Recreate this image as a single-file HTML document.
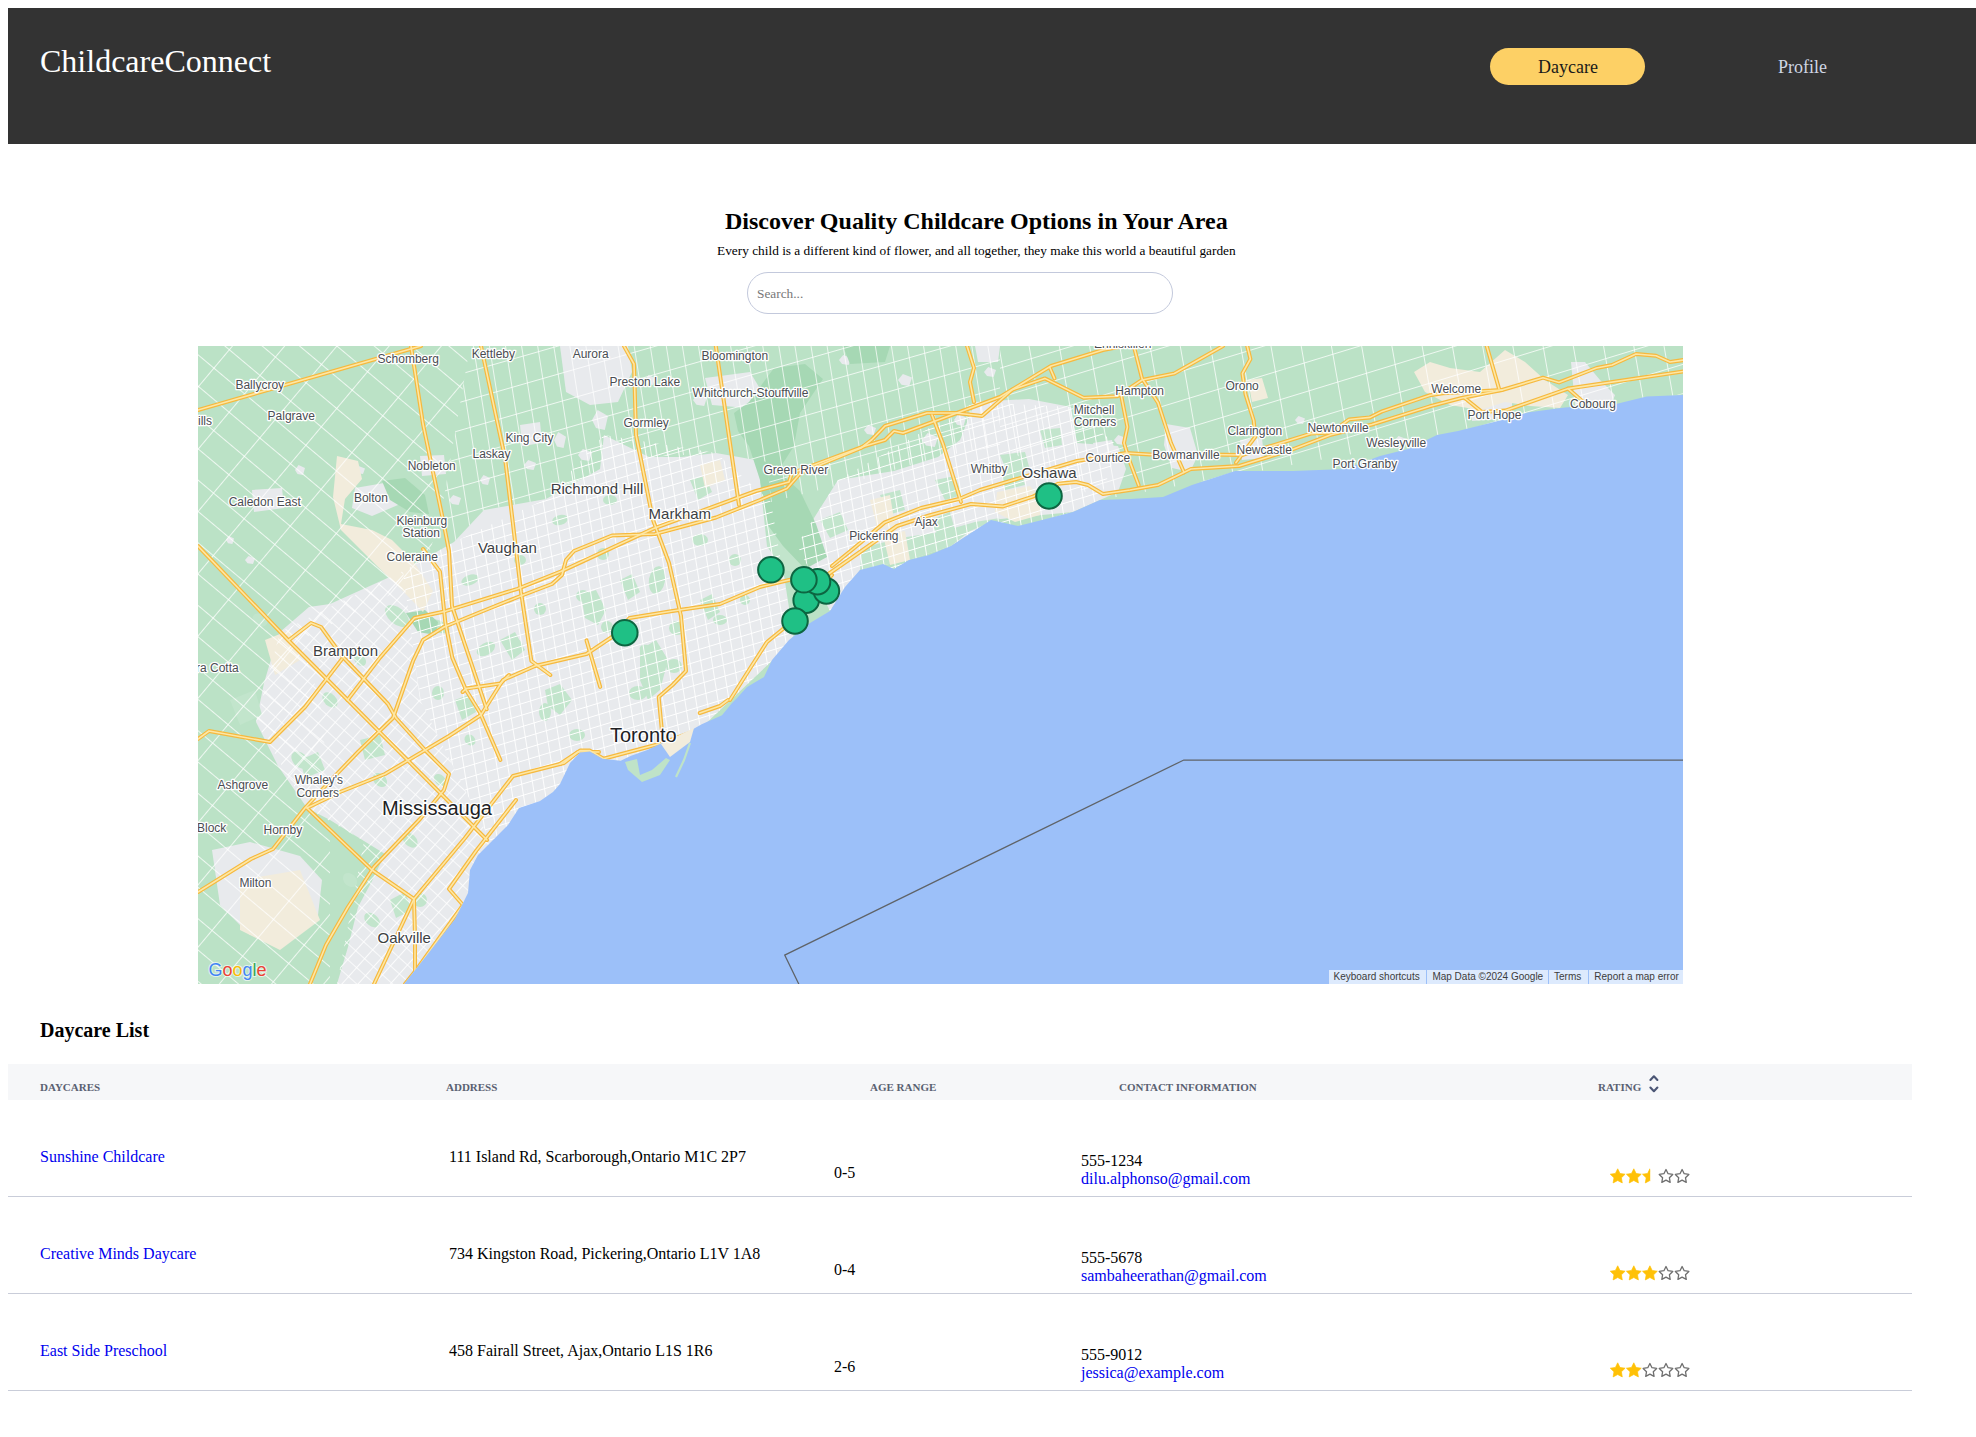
<!DOCTYPE html>
<html><head><meta charset="utf-8">
<style>
html,body{margin:0;padding:0;background:#fff;}
body{width:1976px;height:1437px;position:relative;overflow:hidden;font-family:"Liberation Serif",serif;}
.a{position:absolute;white-space:nowrap;}
#hdr{left:8px;top:8px;width:1968px;height:136px;background:#333333;}
#logo{left:40px;top:43px;font-size:32px;line-height:36px;color:#fff;}
#btn{left:1490px;top:48px;width:155px;height:37px;border-radius:19px;background:#fdd065;}
#btnt{left:1538px;top:57px;font-size:18px;line-height:20px;color:#1a1a1a;}
#prof{left:1778px;top:57px;font-size:18px;line-height:20px;color:#cfd6e4;}
#title{left:725px;top:208px;font-size:24px;font-weight:bold;line-height:26px;color:#000;}
#sub{left:717px;top:243px;font-size:13.333px;line-height:15px;color:#000;}
#search{left:747px;top:272px;width:424px;height:40px;border:1px solid #c3c9dc;border-radius:21px;}
#ph{left:757px;top:286px;font-size:13.333px;line-height:15px;color:#777;}
#map{left:198px;top:346px;width:1485px;height:638px;overflow:hidden;background:#9cc0f9;}
#dl{left:40px;top:1019px;font-size:20px;font-weight:bold;line-height:23px;color:#000;}
#thead{left:8px;top:1064px;width:1904px;height:36px;background:#f6f7f9;}
.th{font-size:11px;font-weight:bold;line-height:12px;color:#5a6172;top:1081px;}
.rowline{left:8px;width:1904px;height:1px;background:#c9cdd9;}
.td{font-size:16px;line-height:18px;color:#000;}
.lnk{color:#0000ee;}
</style></head><body>
<div id="hdr" class="a"></div>
<div id="logo" class="a">ChildcareConnect</div>
<div id="btn" class="a"></div>
<div id="btnt" class="a">Daycare</div>
<div id="prof" class="a">Profile</div>

<div id="title" class="a">Discover Quality Childcare Options in Your Area</div>
<div id="sub" class="a">Every child is a different kind of flower, and all together, they make this world a beautiful garden</div>
<div id="search" class="a"></div>
<div id="ph" class="a">Search...</div>

<div id="map" class="a">
<svg width="1485" height="638" viewBox="198 346 1485 638" style="position:absolute;left:0;top:0;display:block">
<defs>
<pattern id="gPeel" width="40" height="24" patternUnits="userSpaceOnUse" patternTransform="rotate(40)"><path d="M0 0 H40 M0 0 V24" stroke="#ffffff" stroke-width="1.5" stroke-opacity="1" fill="none"/></pattern>
<pattern id="gYork" width="16" height="27" patternUnits="userSpaceOnUse" patternTransform="rotate(-16) skewX(-7)"><path d="M0 0 H16 M0 0 V27" stroke="#ffffff" stroke-width="1.45" stroke-opacity="1" fill="none"/></pattern>
<pattern id="gUrb" width="11" height="11" patternUnits="userSpaceOnUse" patternTransform="rotate(-17) skewX(-8)"><path d="M0 0 H11 M0 0 V11" stroke="#ffffff" stroke-width="1.8" stroke-opacity="1" fill="none"/></pattern>
<pattern id="gMiss" width="12" height="12" patternUnits="userSpaceOnUse" patternTransform="rotate(42)"><path d="M0 0 H12 M0 0 V12" stroke="#ffffff" stroke-width="1.7" stroke-opacity="1" fill="none"/></pattern>
</defs>
<rect x="198" y="346" width="1485" height="638" fill="#bbe2c6"/>
<polygon points="198.0,984.0 337.0,984.0 348.0,947.0 358.0,907.0 372.0,881.0 385.0,854.0 364.0,841.0 330.0,820.0 307.0,808.0 278.0,766.0 256.0,722.0 264.0,683.0 272.0,656.0 280.0,632.0 309.0,607.0 330.0,604.0 403.0,571.0 454.0,542.0 484.0,510.0 546.0,499.0 600.0,469.0 604.0,435.0 649.0,457.0 682.0,457.0 716.0,453.0 767.0,462.0 771.0,502.0 760.0,480.0 767.0,546.0 783.0,569.0 794.0,640.0 700.0,729.0 404.0,984.0" fill="#e8eaed"/>
<polygon points="212.0,850.0 250.0,842.0 300.0,856.0 322.0,880.0 318.0,915.0 290.0,940.0 250.0,935.0 220.0,905.0" fill="#e8eaed"/>
<polygon points="797.0,545.0 838.0,480.0 894.0,471.0 938.0,457.0 960.0,440.0 975.0,402.0 1029.0,399.0 1071.0,407.0 1077.0,443.0 1118.0,446.0 1126.0,469.0 1118.0,492.0 1100.0,500.0 1073.0,512.0 991.0,520.0 951.0,546.0 909.0,560.0 860.0,570.0 830.0,611.0" fill="#e8eaed"/>
<polygon points="560.0,346.0 628.0,346.0 632.0,372.0 618.0,402.0 590.0,405.0 566.0,392.0" fill="#e8eaed"/>
<polygon points="705.0,378.0 750.0,372.0 762.0,392.0 748.0,408.0 712.0,405.0" fill="#e8eaed"/>
<polygon points="355.0,488.0 390.0,482.0 398.0,505.0 372.0,516.0 352.0,508.0" fill="#e8eaed"/>
<polygon points="1166.0,424.0 1190.0,428.0 1198.0,455.0 1190.0,472.0 1172.0,468.0 1164.0,445.0" fill="#e8eaed"/>
<polygon points="1093.0,443.0 1112.0,440.0 1118.0,462.0 1098.0,467.0" fill="#e8eaed"/>
<polygon points="1468.0,395.0 1512.0,393.0 1512.0,418.0 1472.0,421.0" fill="#e8eaed"/>
<polygon points="1571.0,362.0 1585.0,362.0 1600.0,380.0 1615.0,395.0 1612.0,403.0 1575.0,405.0" fill="#e8eaed"/>
<polygon points="1240.0,440.0 1262.0,438.0 1264.0,458.0 1242.0,460.0" fill="#e8eaed"/>
<polygon points="520.0,425.0 540.0,422.0 542.0,443.0 522.0,446.0" fill="#e8eaed"/>
<polygon points="420.0,456.0 444.0,455.0 446.0,474.0 422.0,476.0" fill="#e8eaed"/>
<polygon points="252.0,490.0 282.0,488.0 284.0,508.0 254.0,512.0" fill="#e8eaed"/>
<polygon points="975.0,346.0 1000.0,346.0 998.0,362.0 978.0,362.0" fill="#e8eaed"/>
<polygon points="760.0,480.0 771.0,502.0 767.0,546.0 783.0,569.0 800.0,575.0 815.0,560.0 800.0,520.0 790.0,490.0" fill="#c2e5cc"/>
<polygon points="581.0,595.0 596.0,590.0 606.0,610.0 598.0,625.0 585.0,618.0" fill="#c2e5cc"/>
<polygon points="640.0,650.0 656.0,640.0 668.0,660.0 660.0,690.0 648.0,700.0 640.0,680.0" fill="#c2e5cc"/>
<polygon points="545.0,690.0 560.0,684.0 572.0,700.0 560.0,715.0 548.0,706.0" fill="#c2e5cc"/>
<polygon points="620.0,580.0 632.0,574.0 640.0,592.0 628.0,600.0" fill="#c2e5cc"/>
<polygon points="700.0,600.0 712.0,594.0 720.0,612.0 708.0,620.0" fill="#c2e5cc"/>
<polygon points="500.0,640.0 515.0,632.0 525.0,650.0 512.0,660.0" fill="#c2e5cc"/>
<polygon points="455.0,700.0 470.0,694.0 476.0,712.0 462.0,720.0" fill="#c2e5cc"/>
<polygon points="690.0,480.0 705.0,476.0 712.0,492.0 698.0,500.0" fill="#c2e5cc"/>
<polygon points="880.0,495.0 900.0,490.0 905.0,510.0 888.0,515.0" fill="#c2e5cc"/>
<polygon points="930.0,520.0 950.0,512.0 955.0,530.0 938.0,536.0" fill="#c2e5cc"/>
<polygon points="1000.0,470.0 1020.0,465.0 1025.0,485.0 1005.0,490.0" fill="#c2e5cc"/>
<polygon points="360.0,740.0 380.0,735.0 385.0,755.0 365.0,760.0" fill="#c2e5cc"/>
<polygon points="300.0,760.0 318.0,752.0 325.0,770.0 305.0,778.0" fill="#c2e5cc"/>
<polygon points="390.0,900.0 405.0,892.0 412.0,910.0 396.0,918.0" fill="#c2e5cc"/>
<polygon points="230.0,700.0 255.0,690.0 262.0,715.0 240.0,725.0" fill="#c2e5cc"/>
<polygon points="862.0,548.0 900.0,538.0 940.0,532.0 975.0,522.0 1000.0,518.0 970.0,531.0 951.0,546.0 909.0,560.0 860.0,570.0" fill="#c2e5cc"/>
<polygon points="935.0,480.0 955.0,476.0 962.0,495.0 945.0,500.0" fill="#c2e5cc"/>
<polygon points="1000.0,455.0 1025.0,452.0 1030.0,470.0 1008.0,474.0" fill="#c2e5cc"/>
<polygon points="1040.0,430.0 1060.0,428.0 1062.0,445.0 1045.0,448.0" fill="#c2e5cc"/>
<polygon points="820.0,520.0 840.0,512.0 848.0,530.0 830.0,538.0" fill="#c2e5cc"/>
<ellipse cx="397" cy="616" rx="14" ry="8" transform="rotate(40 397 616)" fill="#c2e5cc"/>
<ellipse cx="437" cy="626" rx="13" ry="6" transform="rotate(20 437 626)" fill="#c2e5cc"/>
<ellipse cx="486" cy="649" rx="10" ry="6" transform="rotate(-30 486 649)" fill="#c2e5cc"/>
<ellipse cx="515" cy="647" rx="8" ry="8" transform="rotate(0 515 647)" fill="#c2e5cc"/>
<ellipse cx="540" cy="609" rx="6" ry="6" transform="rotate(0 540 609)" fill="#c2e5cc"/>
<ellipse cx="583" cy="596" rx="7" ry="6" transform="rotate(0 583 596)" fill="#c2e5cc"/>
<ellipse cx="603" cy="554" rx="6" ry="6" transform="rotate(0 603 554)" fill="#c2e5cc"/>
<ellipse cx="607" cy="627" rx="6" ry="6" transform="rotate(0 607 627)" fill="#c2e5cc"/>
<ellipse cx="652" cy="652" rx="13" ry="6" transform="rotate(20 652 652)" fill="#c2e5cc"/>
<ellipse cx="657" cy="580" rx="8" ry="14" transform="rotate(10 657 580)" fill="#c2e5cc"/>
<ellipse cx="677" cy="628" rx="8" ry="7" transform="rotate(0 677 628)" fill="#c2e5cc"/>
<ellipse cx="674" cy="666" rx="8" ry="7" transform="rotate(0 674 666)" fill="#c2e5cc"/>
<ellipse cx="638" cy="693" rx="9" ry="7" transform="rotate(0 638 693)" fill="#c2e5cc"/>
<ellipse cx="545" cy="712" rx="6" ry="9" transform="rotate(0 545 712)" fill="#c2e5cc"/>
<ellipse cx="438" cy="693" rx="6" ry="7" transform="rotate(0 438 693)" fill="#c2e5cc"/>
<ellipse cx="577" cy="735" rx="8" ry="6" transform="rotate(0 577 735)" fill="#c2e5cc"/>
<ellipse cx="470" cy="580" rx="9" ry="5" transform="rotate(-20 470 580)" fill="#c2e5cc"/>
<ellipse cx="520" cy="560" rx="6" ry="5" transform="rotate(0 520 560)" fill="#c2e5cc"/>
<ellipse cx="560" cy="520" rx="8" ry="5" transform="rotate(-15 560 520)" fill="#c2e5cc"/>
<ellipse cx="610" cy="500" rx="7" ry="5" transform="rotate(0 610 500)" fill="#c2e5cc"/>
<ellipse cx="700" cy="540" rx="8" ry="6" transform="rotate(0 700 540)" fill="#c2e5cc"/>
<ellipse cx="735" cy="560" rx="6" ry="6" transform="rotate(0 735 560)" fill="#c2e5cc"/>
<ellipse cx="720" cy="620" rx="7" ry="5" transform="rotate(0 720 620)" fill="#c2e5cc"/>
<ellipse cx="745" cy="600" rx="5" ry="5" transform="rotate(0 745 600)" fill="#c2e5cc"/>
<ellipse cx="330" cy="700" rx="9" ry="6" transform="rotate(45 330 700)" fill="#c2e5cc"/>
<ellipse cx="360" cy="660" rx="7" ry="5" transform="rotate(45 360 660)" fill="#c2e5cc"/>
<ellipse cx="300" cy="760" rx="10" ry="7" transform="rotate(45 300 760)" fill="#c2e5cc"/>
<ellipse cx="380" cy="780" rx="8" ry="6" transform="rotate(45 380 780)" fill="#c2e5cc"/>
<ellipse cx="410" cy="840" rx="9" ry="6" transform="rotate(45 410 840)" fill="#c2e5cc"/>
<ellipse cx="350" cy="880" rx="8" ry="6" transform="rotate(45 350 880)" fill="#c2e5cc"/>
<ellipse cx="440" cy="780" rx="7" ry="5" transform="rotate(45 440 780)" fill="#c2e5cc"/>
<ellipse cx="470" cy="740" rx="6" ry="5" transform="rotate(45 470 740)" fill="#c2e5cc"/>
<ellipse cx="260" cy="620" rx="8" ry="6" transform="rotate(30 260 620)" fill="#c2e5cc"/>
<ellipse cx="420" cy="900" rx="7" ry="7" transform="rotate(0 420 900)" fill="#c2e5cc"/>
<ellipse cx="372" cy="920" rx="9" ry="6" transform="rotate(40 372 920)" fill="#c2e5cc"/>
<path d="M565 380 L572.0 366 L585 374.4 L581.0 394 L570.0 391.2 Z" fill="#e8eaed"/>
<path d="M592 420 L597.6 410 L608 416.0 L604.8 430 L596.0 428.0 Z" fill="#e8eaed"/>
<path d="M578 455 L582.9 449 L592 452.6 L589.2 461 L581.5 459.8 Z" fill="#e8eaed"/>
<path d="M617 470 L622.6 464 L633 467.6 L629.8 476 L621.0 474.8 Z" fill="#e8eaed"/>
<path d="M554 440 L558.2 432 L566 436.8 L563.6 448 L557.0 446.4 Z" fill="#e8eaed"/>
<path d="M524 465 L528.2 460 L536 463.0 L533.6 470 L527.0 469.0 Z" fill="#e8eaed"/>
<path d="M693 400 L697.9 394 L707 397.6 L704.2 406 L696.5 404.8 Z" fill="#e8eaed"/>
<path d="M645 380 L648.5 375 L655 378.0 L653.0 385 L647.5 384.0 Z" fill="#e8eaed"/>
<path d="M839 360 L843.2 355 L851 358.0 L848.6 365 L842.0 364.0 Z" fill="#e8eaed"/>
<path d="M898 380 L902.9 374 L912 377.6 L909.2 386 L901.5 384.8 Z" fill="#e8eaed"/>
<path d="M922 440 L927.6 433 L938 437.2 L934.8 447 L926.0 445.6 Z" fill="#e8eaed"/>
<path d="M954 420 L958.2 414 L966 417.6 L963.6 426 L957.0 424.8 Z" fill="#e8eaed"/>
<path d="M984 372 L988.2 367 L996 370.0 L993.6 377 L987.0 376.0 Z" fill="#e8eaed"/>
<path d="M1114 440 L1118.2 435 L1126 438.0 L1123.6 445 L1117.0 444.0 Z" fill="#e8eaed"/>
<path d="M864 430 L868.2 425 L876 428.0 L873.6 435 L867.0 434.0 Z" fill="#e8eaed"/>
<path d="M810 470 L813.5 465 L820 468.0 L818.0 475 L812.5 474.0 Z" fill="#e8eaed"/>
<path d="M449 500 L453.2 495 L461 498.0 L458.6 505 L452.0 504.0 Z" fill="#e8eaed"/>
<path d="M480 480 L483.5 475 L490 478.0 L488.0 485 L482.5 484.0 Z" fill="#e8eaed"/>
<path d="M295 470 L298.5 465 L305 468.0 L303.0 475 L297.5 474.0 Z" fill="#e8eaed"/>
<path d="M355 470 L358.5 466 L365 468.4 L363.0 474 L357.5 473.2 Z" fill="#e8eaed"/>
<path d="M245 560 L248.5 556 L255 558.4 L253.0 564 L247.5 563.2 Z" fill="#e8eaed"/>
<path d="M226 540 L228.8 536 L234 538.4 L232.4 544 L228.0 543.2 Z" fill="#e8eaed"/>
<path d="M1295 420 L1298.5 416 L1305 418.4 L1303.0 424 L1297.5 423.2 Z" fill="#e8eaed"/>
<path d="M1395 440 L1398.5 436 L1405 438.4 L1403.0 444 L1397.5 443.2 Z" fill="#e8eaed"/>
<polygon points="734.0,413.0 749.0,402.0 774.0,368.0 805.0,364.0 823.0,379.0 800.0,413.0 794.0,446.0 778.0,471.0 800.0,491.0 816.0,524.0 827.0,557.0 805.0,569.0 783.0,546.0 767.0,524.0 760.0,480.0 749.0,446.0 738.0,431.0" fill="#a6d8b4"/>
<polygon points="843.0,346.0 890.0,346.0 885.0,362.0 850.0,364.0" fill="#a6d8b4"/>
<polygon points="382.0,481.0 405.0,478.0 425.0,495.0 429.0,514.0 410.0,512.0 390.0,500.0" fill="#a6d8b4"/>
<polygon points="406.0,613.0 425.0,610.0 438.0,622.0 436.0,635.0 418.0,632.0" fill="#a6d8b4"/>
<polygon points="337.0,456.0 358.0,461.0 362.0,479.0 345.0,499.0 341.0,524.0 372.0,530.0 392.0,540.0 413.0,561.0 433.0,591.0 423.0,612.0 403.0,591.0 378.0,567.0 341.0,530.0 333.0,497.0" fill="#f2ecdc"/>
<polygon points="1414.0,372.0 1430.0,362.0 1450.0,368.0 1480.0,372.0 1505.0,350.0 1525.0,362.0 1545.0,380.0 1568.0,395.0 1560.0,408.0 1530.0,406.0 1505.0,402.0 1480.0,410.0 1450.0,405.0 1425.0,392.0" fill="#f2ecdc"/>
<polygon points="997.0,492.0 1030.0,486.0 1042.0,500.0 1040.0,515.0 1015.0,522.0 995.0,512.0" fill="#f2ecdc"/>
<polygon points="883.0,535.0 905.0,531.0 910.0,560.0 890.0,565.0" fill="#f2ecdc"/>
<polygon points="240.0,880.0 300.0,870.0 320.0,920.0 280.0,950.0 240.0,930.0" fill="#f2ecdc"/>
<polygon points="870.0,500.0 890.0,495.0 895.0,525.0 878.0,530.0" fill="#f2ecdc"/>
<polygon points="700.0,465.0 720.0,460.0 725.0,480.0 705.0,488.0" fill="#f2ecdc"/>
<polygon points="265.0,640.0 290.0,630.0 300.0,660.0 275.0,675.0" fill="#f2ecdc"/>
<polygon points="1248.0,380.0 1262.0,378.0 1268.0,398.0 1252.0,402.0" fill="#f2ecdc"/>
<pattern id="gDur" width="30" height="28" patternUnits="userSpaceOnUse" patternTransform="rotate(-17) skewX(-7)"><path d="M0 0 H30 M0 0 V28" stroke="#ffffff" stroke-width="1.5" stroke-opacity="1" fill="none"/></pattern>
<polygon points="198.0,346.0 470.0,346.0 440.0,520.0 420.0,580.0 300.0,640.0 198.0,700.0" fill="url(#gPeel)"/>
<polygon points="470.0,346.0 1000.0,346.0 1000.0,446.0 938.0,457.0 860.0,480.0 771.0,502.0 767.0,462.0 716.0,453.0 649.0,457.0 604.0,435.0 600.0,469.0 546.0,499.0 484.0,510.0 454.0,542.0 440.0,520.0" fill="url(#gYork)"/>
<polygon points="1000.0,346.0 1683.0,346.0 1683.0,394.0 1100.0,500.0 1000.0,446.0" fill="url(#gDur)"/>
<polygon points="198.0,700.0 300.0,640.0 320.0,700.0 330.0,800.0 330.0,984.0 198.0,984.0" fill="url(#gPeel)"/>
<polygon points="454.0,542.0 546.0,499.0 604.0,435.0 716.0,453.0 771.0,502.0 794.0,640.0 700.0,729.0 500.0,860.0 420.0,700.0 403.0,571.0" fill="url(#gUrb)"/>
<polygon points="256.0,722.0 280.0,632.0 403.0,571.0 420.0,700.0 500.0,860.0 404.0,984.0 337.0,984.0 364.0,841.0 307.0,808.0" fill="url(#gMiss)"/>
<polygon points="797.0,545.0 838.0,480.0 975.0,402.0 1071.0,407.0 1118.0,446.0 1100.0,500.0 830.0,611.0" fill="url(#gUrb)"/>
<path d="M198.0 892.0 L251.0 859.0 L273.0 849.0 L305.0 808.0 L332.0 779.0 L358.0 752.0 L393.0 718.0 L413.0 661.0 L423.0 640.0 L444.0 627.0 L483.0 611.0 L518.0 597.0 L552.0 584.0 L562.0 575.0 L566.0 560.0 L574.0 551.0 L612.0 535.5 L655.0 534.0 L716.0 517.5 L760.0 500.0 L787.0 488.5 L800.5 473.0 L827.0 462.0 L861.0 448.0 L872.0 439.5 L885.0 426.0 L927.0 413.0 L956.0 413.0 L982.0 416.0 L1012.4 389.7 L1044.8 378.4 L1083.6 397.8 L1117.7 396.2 L1142.0 380.0 L1174.3 373.5 L1223.0 346.0" fill="none" stroke="#f6b93e" stroke-width="4" stroke-linejoin="round" stroke-linecap="round"/>
<path d="M307.0 808.0 L340.0 792.0 L385.0 774.0 L449.0 736.0 L481.0 715.0 L503.0 680.0 L535.0 666.0 L586.5 654.0 L612.0 637.0 L629.5 618.0 L672.5 611.0 L720.0 604.0 L760.0 587.0 L789.0 580.0 L827.0 575.0 L860.0 552.0 L897.0 526.0 L929.0 515.5 L971.0 504.0 L1003.0 506.4 L1033.0 496.6 L1058.0 483.7 L1076.0 482.0 L1088.0 485.0 L1103.0 494.0 L1130.0 490.0 L1158.0 485.0 L1191.0 469.0 L1239.0 466.0 L1291.0 450.0 L1331.0 434.7 L1372.0 424.5 L1430.0 406.3 L1461.6 398.0 L1502.0 390.0 L1543.0 377.7 L1559.0 382.4 L1596.5 368.0 L1612.0 365.0 L1636.0 354.0 L1656.0 355.7 L1670.0 362.0 L1684.0 360.0" fill="none" stroke="#f6b93e" stroke-width="4" stroke-linejoin="round" stroke-linecap="round"/>
<path d="M462.6 692.0 L466.0 688.6 L500.4 683.5 L509.0 675.0" fill="none" stroke="#f6b93e" stroke-width="4" stroke-linejoin="round" stroke-linecap="round"/>
<path d="M198.0 410.0 L421.0 346.0" fill="none" stroke="#f6b93e" stroke-width="4" stroke-linejoin="round" stroke-linecap="round"/>
<path d="M411.0 346.0 L423.0 424.0 L443.0 520.0 L449.0 551.0 L452.0 606.0 L486.7 709.3" fill="none" stroke="#f6b93e" stroke-width="4" stroke-linejoin="round" stroke-linecap="round"/>
<path d="M481.0 346.0 L505.0 458.0 L512.5 520.0 L521.0 592.0 L531.4 661.0 L550.3 675.0" fill="none" stroke="#f6b93e" stroke-width="4" stroke-linejoin="round" stroke-linecap="round"/>
<path d="M423.0 549.0 L440.0 571.6 L445.4 623.0 L452.3 657.6 L466.0 690.0 L480.0 712.7 L500.4 760.0" fill="none" stroke="#f6b93e" stroke-width="4" stroke-linejoin="round" stroke-linecap="round"/>
<path d="M198.0 546.0 L288.0 640.0 L487.0 840.0" fill="none" stroke="#f6b93e" stroke-width="4" stroke-linejoin="round" stroke-linecap="round"/>
<path d="M289.0 640.0 L311.0 623.0 L321.0 627.0 L342.0 656.0 L388.0 704.0 L396.0 718.0 L425.0 750.0 L449.0 774.0 L444.0 790.0 L420.0 819.0 L374.0 867.0 L348.0 907.0 L326.0 945.0 L310.0 984.0" fill="none" stroke="#f6b93e" stroke-width="4" stroke-linejoin="round" stroke-linecap="round"/>
<path d="M599.0 752.0 L578.0 752.0 L564.0 763.0 L513.0 776.0 L492.0 803.0 L465.0 838.0 L414.0 899.0 L374.0 984.0" fill="none" stroke="#f6b93e" stroke-width="4" stroke-linejoin="round" stroke-linecap="round"/>
<path d="M307.0 808.0 L372.0 870.0 L414.0 899.0 L415.0 937.0 L415.0 984.0" fill="none" stroke="#f6b93e" stroke-width="4" stroke-linejoin="round" stroke-linecap="round"/>
<path d="M624.0 346.0 L634.0 364.0 L636.0 435.0 L645.0 480.0 L653.0 520.0 L669.0 563.0 L681.0 616.0 L686.0 671.0 L672.5 685.0 L658.7 697.0 L662.0 731.6" fill="none" stroke="#f6b93e" stroke-width="4" stroke-linejoin="round" stroke-linecap="round"/>
<path d="M586.5 640.4 L600.2 686.9" fill="none" stroke="#f6b93e" stroke-width="4" stroke-linejoin="round" stroke-linecap="round"/>
<path d="M560.0 764.0 L580.0 750.6 L590.0 750.6 L603.5 758.7 L661.0 743.5 L690.0 733.0" fill="none" stroke="#f6b93e" stroke-width="4" stroke-linejoin="round" stroke-linecap="round"/>
<path d="M699.7 713.0 L720.0 706.0 L728.0 700.0" fill="none" stroke="#f6b93e" stroke-width="4" stroke-linejoin="round" stroke-linecap="round"/>
<path d="M932.0 415.0 L943.0 444.0 L961.0 502.0" fill="none" stroke="#f6b93e" stroke-width="4" stroke-linejoin="round" stroke-linecap="round"/>
<path d="M1121.0 394.6 L1127.4 427.0 L1124.0 443.0 L1129.0 459.4 L1138.7 485.3" fill="none" stroke="#f6b93e" stroke-width="4" stroke-linejoin="round" stroke-linecap="round"/>
<path d="M1133.8 346.0 L1142.0 378.4 L1158.0 402.7 L1171.0 443.0 L1184.0 472.3" fill="none" stroke="#f6b93e" stroke-width="4" stroke-linejoin="round" stroke-linecap="round"/>
<path d="M1049.6 367.0 L1054.5 378.4" fill="none" stroke="#f6b93e" stroke-width="4" stroke-linejoin="round" stroke-linecap="round"/>
<path d="M967.0 346.0 L974.0 368.0 L970.0 382.0 L974.0 402.0" fill="none" stroke="#f6b93e" stroke-width="4" stroke-linejoin="round" stroke-linecap="round"/>
<path d="M832.0 575.0 L783.0 629.0 L767.0 642.0 L749.0 670.0 L730.0 700.0" fill="none" stroke="#f6b93e" stroke-width="4" stroke-linejoin="round" stroke-linecap="round"/>
<path d="M347.5 700.0 L380.0 657.6 L414.4 618.0 L445.4 611.2 L517.6 588.8 L560.7 571.6 L653.5 528.6 L756.0 491.0 L789.0 482.0 L792.0 473.0 L827.0 460.0 L865.0 446.0 L885.0 440.0 L894.0 431.0 L903.0 433.0 L1000.0 397.0 L1051.0 366.0 L1103.0 350.0 L1155.0 340.0" fill="none" stroke="#f6b93e" stroke-width="4" stroke-linejoin="round" stroke-linecap="round"/>
<path d="M832.0 566.0 L853.0 549.0 L884.7 522.4 L921.0 508.0 L959.0 499.0 L980.0 490.0 L1077.0 461.0 L1126.0 453.0 L1150.0 454.5 L1207.0 454.5 L1242.0 455.0 L1311.0 433.6 L1331.0 432.6 L1349.0 419.5 L1370.0 417.4 L1382.0 411.4 L1430.0 395.2 L1442.8 393.3 L1502.0 390.0" fill="none" stroke="#f6b93e" stroke-width="4" stroke-linejoin="round" stroke-linecap="round"/>
<path d="M1482.0 412.0 L1505.5 410.6 L1568.3 388.6 L1684.0 371.4" fill="none" stroke="#f6b93e" stroke-width="4" stroke-linejoin="round" stroke-linecap="round"/>
<path d="M198.0 739.0 L209.0 731.0 L270.0 742.0 L305.0 707.0 L342.0 659.0" fill="none" stroke="#f6b93e" stroke-width="4" stroke-linejoin="round" stroke-linecap="round"/>
<path d="M516.0 800.0 L476.0 851.0 L449.0 889.0 L463.0 905.0 L417.0 969.0 L405.0 984.0" fill="none" stroke="#f6b93e" stroke-width="4" stroke-linejoin="round" stroke-linecap="round"/>
<path d="M1486.7 346.0 L1499.0 388.6" fill="none" stroke="#f6b93e" stroke-width="4" stroke-linejoin="round" stroke-linecap="round"/>
<path d="M1464.7 398.0 L1482.0 412.0" fill="none" stroke="#f6b93e" stroke-width="4" stroke-linejoin="round" stroke-linecap="round"/>
<path d="M1568.0 388.6 L1582.4 401.2" fill="none" stroke="#f6b93e" stroke-width="4" stroke-linejoin="round" stroke-linecap="round"/>
<path d="M715.8 346.0 L739.0 505.0" fill="none" stroke="#f6b93e" stroke-width="4" stroke-linejoin="round" stroke-linecap="round"/>
<path d="M1247.2 346.0 L1250.4 359.0 L1242.4 373.5 L1245.6 394.6 L1253.7 420.5 L1255.3 436.7 L1236.0 462.6" fill="none" stroke="#f6b93e" stroke-width="4" stroke-linejoin="round" stroke-linecap="round"/>
<path d="M198.0 892.0 L251.0 859.0 L273.0 849.0 L305.0 808.0 L332.0 779.0 L358.0 752.0 L393.0 718.0 L413.0 661.0 L423.0 640.0 L444.0 627.0 L483.0 611.0 L518.0 597.0 L552.0 584.0 L562.0 575.0 L566.0 560.0 L574.0 551.0 L612.0 535.5 L655.0 534.0 L716.0 517.5 L760.0 500.0 L787.0 488.5 L800.5 473.0 L827.0 462.0 L861.0 448.0 L872.0 439.5 L885.0 426.0 L927.0 413.0 L956.0 413.0 L982.0 416.0 L1012.4 389.7 L1044.8 378.4 L1083.6 397.8 L1117.7 396.2 L1142.0 380.0 L1174.3 373.5 L1223.0 346.0" fill="none" stroke="#fde7a5" stroke-width="1.6" stroke-linejoin="round" stroke-linecap="round"/>
<path d="M307.0 808.0 L340.0 792.0 L385.0 774.0 L449.0 736.0 L481.0 715.0 L503.0 680.0 L535.0 666.0 L586.5 654.0 L612.0 637.0 L629.5 618.0 L672.5 611.0 L720.0 604.0 L760.0 587.0 L789.0 580.0 L827.0 575.0 L860.0 552.0 L897.0 526.0 L929.0 515.5 L971.0 504.0 L1003.0 506.4 L1033.0 496.6 L1058.0 483.7 L1076.0 482.0 L1088.0 485.0 L1103.0 494.0 L1130.0 490.0 L1158.0 485.0 L1191.0 469.0 L1239.0 466.0 L1291.0 450.0 L1331.0 434.7 L1372.0 424.5 L1430.0 406.3 L1461.6 398.0 L1502.0 390.0 L1543.0 377.7 L1559.0 382.4 L1596.5 368.0 L1612.0 365.0 L1636.0 354.0 L1656.0 355.7 L1670.0 362.0 L1684.0 360.0" fill="none" stroke="#fde7a5" stroke-width="1.6" stroke-linejoin="round" stroke-linecap="round"/>
<path d="M462.6 692.0 L466.0 688.6 L500.4 683.5 L509.0 675.0" fill="none" stroke="#fde7a5" stroke-width="1.6" stroke-linejoin="round" stroke-linecap="round"/>
<path d="M198.0 410.0 L421.0 346.0" fill="none" stroke="#fde7a5" stroke-width="1.6" stroke-linejoin="round" stroke-linecap="round"/>
<path d="M411.0 346.0 L423.0 424.0 L443.0 520.0 L449.0 551.0 L452.0 606.0 L486.7 709.3" fill="none" stroke="#fde7a5" stroke-width="1.6" stroke-linejoin="round" stroke-linecap="round"/>
<path d="M481.0 346.0 L505.0 458.0 L512.5 520.0 L521.0 592.0 L531.4 661.0 L550.3 675.0" fill="none" stroke="#fde7a5" stroke-width="1.6" stroke-linejoin="round" stroke-linecap="round"/>
<path d="M423.0 549.0 L440.0 571.6 L445.4 623.0 L452.3 657.6 L466.0 690.0 L480.0 712.7 L500.4 760.0" fill="none" stroke="#fde7a5" stroke-width="1.6" stroke-linejoin="round" stroke-linecap="round"/>
<path d="M198.0 546.0 L288.0 640.0 L487.0 840.0" fill="none" stroke="#fde7a5" stroke-width="1.6" stroke-linejoin="round" stroke-linecap="round"/>
<path d="M289.0 640.0 L311.0 623.0 L321.0 627.0 L342.0 656.0 L388.0 704.0 L396.0 718.0 L425.0 750.0 L449.0 774.0 L444.0 790.0 L420.0 819.0 L374.0 867.0 L348.0 907.0 L326.0 945.0 L310.0 984.0" fill="none" stroke="#fde7a5" stroke-width="1.6" stroke-linejoin="round" stroke-linecap="round"/>
<path d="M599.0 752.0 L578.0 752.0 L564.0 763.0 L513.0 776.0 L492.0 803.0 L465.0 838.0 L414.0 899.0 L374.0 984.0" fill="none" stroke="#fde7a5" stroke-width="1.6" stroke-linejoin="round" stroke-linecap="round"/>
<path d="M307.0 808.0 L372.0 870.0 L414.0 899.0 L415.0 937.0 L415.0 984.0" fill="none" stroke="#fde7a5" stroke-width="1.6" stroke-linejoin="round" stroke-linecap="round"/>
<path d="M624.0 346.0 L634.0 364.0 L636.0 435.0 L645.0 480.0 L653.0 520.0 L669.0 563.0 L681.0 616.0 L686.0 671.0 L672.5 685.0 L658.7 697.0 L662.0 731.6" fill="none" stroke="#fde7a5" stroke-width="1.6" stroke-linejoin="round" stroke-linecap="round"/>
<path d="M586.5 640.4 L600.2 686.9" fill="none" stroke="#fde7a5" stroke-width="1.6" stroke-linejoin="round" stroke-linecap="round"/>
<path d="M560.0 764.0 L580.0 750.6 L590.0 750.6 L603.5 758.7 L661.0 743.5 L690.0 733.0" fill="none" stroke="#fde7a5" stroke-width="1.6" stroke-linejoin="round" stroke-linecap="round"/>
<path d="M699.7 713.0 L720.0 706.0 L728.0 700.0" fill="none" stroke="#fde7a5" stroke-width="1.6" stroke-linejoin="round" stroke-linecap="round"/>
<path d="M932.0 415.0 L943.0 444.0 L961.0 502.0" fill="none" stroke="#fde7a5" stroke-width="1.6" stroke-linejoin="round" stroke-linecap="round"/>
<path d="M1121.0 394.6 L1127.4 427.0 L1124.0 443.0 L1129.0 459.4 L1138.7 485.3" fill="none" stroke="#fde7a5" stroke-width="1.6" stroke-linejoin="round" stroke-linecap="round"/>
<path d="M1133.8 346.0 L1142.0 378.4 L1158.0 402.7 L1171.0 443.0 L1184.0 472.3" fill="none" stroke="#fde7a5" stroke-width="1.6" stroke-linejoin="round" stroke-linecap="round"/>
<path d="M1049.6 367.0 L1054.5 378.4" fill="none" stroke="#fde7a5" stroke-width="1.6" stroke-linejoin="round" stroke-linecap="round"/>
<path d="M967.0 346.0 L974.0 368.0 L970.0 382.0 L974.0 402.0" fill="none" stroke="#fde7a5" stroke-width="1.6" stroke-linejoin="round" stroke-linecap="round"/>
<path d="M832.0 575.0 L783.0 629.0 L767.0 642.0 L749.0 670.0 L730.0 700.0" fill="none" stroke="#fde7a5" stroke-width="1.6" stroke-linejoin="round" stroke-linecap="round"/>
<path d="M347.5 700.0 L380.0 657.6 L414.4 618.0 L445.4 611.2 L517.6 588.8 L560.7 571.6 L653.5 528.6 L756.0 491.0 L789.0 482.0 L792.0 473.0 L827.0 460.0 L865.0 446.0 L885.0 440.0 L894.0 431.0 L903.0 433.0 L1000.0 397.0 L1051.0 366.0 L1103.0 350.0 L1155.0 340.0" fill="none" stroke="#fde7a5" stroke-width="1.6" stroke-linejoin="round" stroke-linecap="round"/>
<path d="M832.0 566.0 L853.0 549.0 L884.7 522.4 L921.0 508.0 L959.0 499.0 L980.0 490.0 L1077.0 461.0 L1126.0 453.0 L1150.0 454.5 L1207.0 454.5 L1242.0 455.0 L1311.0 433.6 L1331.0 432.6 L1349.0 419.5 L1370.0 417.4 L1382.0 411.4 L1430.0 395.2 L1442.8 393.3 L1502.0 390.0" fill="none" stroke="#fde7a5" stroke-width="1.6" stroke-linejoin="round" stroke-linecap="round"/>
<path d="M1482.0 412.0 L1505.5 410.6 L1568.3 388.6 L1684.0 371.4" fill="none" stroke="#fde7a5" stroke-width="1.6" stroke-linejoin="round" stroke-linecap="round"/>
<path d="M198.0 739.0 L209.0 731.0 L270.0 742.0 L305.0 707.0 L342.0 659.0" fill="none" stroke="#fde7a5" stroke-width="1.6" stroke-linejoin="round" stroke-linecap="round"/>
<path d="M516.0 800.0 L476.0 851.0 L449.0 889.0 L463.0 905.0 L417.0 969.0 L405.0 984.0" fill="none" stroke="#fde7a5" stroke-width="1.6" stroke-linejoin="round" stroke-linecap="round"/>
<path d="M1486.7 346.0 L1499.0 388.6" fill="none" stroke="#fde7a5" stroke-width="1.6" stroke-linejoin="round" stroke-linecap="round"/>
<path d="M1464.7 398.0 L1482.0 412.0" fill="none" stroke="#fde7a5" stroke-width="1.6" stroke-linejoin="round" stroke-linecap="round"/>
<path d="M1568.0 388.6 L1582.4 401.2" fill="none" stroke="#fde7a5" stroke-width="1.6" stroke-linejoin="round" stroke-linecap="round"/>
<path d="M715.8 346.0 L739.0 505.0" fill="none" stroke="#fde7a5" stroke-width="1.6" stroke-linejoin="round" stroke-linecap="round"/>
<path d="M1247.2 346.0 L1250.4 359.0 L1242.4 373.5 L1245.6 394.6 L1253.7 420.5 L1255.3 436.7 L1236.0 462.6" fill="none" stroke="#fde7a5" stroke-width="1.6" stroke-linejoin="round" stroke-linecap="round"/>
<polygon points="404.0,984.0 427.0,955.0 455.0,919.0 468.0,893.0 470.0,870.0 478.0,855.0 493.0,840.0 508.0,825.0 519.0,808.0 540.0,801.0 553.0,792.0 560.0,784.0 570.0,763.0 580.0,752.6 590.0,751.6 602.5,758.7 620.7,760.7 631.0,755.7 646.0,750.6 661.0,743.5 681.5,736.4 694.6,728.3 701.7,724.3 722.0,715.2 732.0,703.0 737.0,698.0 747.0,687.0 764.0,677.0 772.0,660.0 789.0,640.0 810.0,623.0 830.0,611.0 845.0,587.0 860.0,570.0 883.0,564.0 894.0,569.0 909.0,560.0 929.0,555.0 951.0,546.0 974.0,531.0 991.0,520.0 1018.0,526.0 1042.0,520.0 1073.0,512.0 1100.0,500.0 1130.0,499.0 1163.0,497.0 1192.0,485.0 1235.0,471.0 1293.0,471.0 1345.0,469.0 1380.0,456.0 1408.0,449.0 1437.0,435.0 1458.0,431.0 1496.0,421.6 1529.0,412.2 1565.0,407.5 1615.0,404.3 1646.7,396.5 1683.0,395.0 1683.0,984.0" fill="#9cc0f9"/>
<polygon points="625.0,762.0 637.0,759.0 640.0,775.0 652.0,770.0 666.0,758.0 670.0,760.0 660.0,775.0 642.0,782.0 628.0,770.0" fill="#bfe3c8"/>
<path d="M690 743 L684 760 L676 777" stroke="#bfe3c8" stroke-width="2.2" fill="none"/>
<polygon points="661.0,744.0 694.0,728.0 690.0,742.0 670.0,757.0" fill="#f2ecdc"/>
<path d="M799 984.5 L784.7 955.1 L1183.8 760 L1684 760" fill="none" stroke="#5f6368" stroke-width="1.25"/>
<text x="377.6" y="362.8" font-family="Liberation Sans" font-size="12" fill="#4a4d52" stroke="#ffffff" stroke-width="2.6" stroke-linejoin="round" paint-order="stroke" >Schomberg</text>
<text x="471.7" y="357.9" font-family="Liberation Sans" font-size="12" fill="#4a4d52" stroke="#ffffff" stroke-width="2.6" stroke-linejoin="round" paint-order="stroke" >Kettleby</text>
<text x="572.7" y="358.2" font-family="Liberation Sans" font-size="12" fill="#4a4d52" stroke="#ffffff" stroke-width="2.6" stroke-linejoin="round" paint-order="stroke" >Aurora</text>
<text x="701.4" y="359.8" font-family="Liberation Sans" font-size="12" fill="#4a4d52" stroke="#ffffff" stroke-width="2.6" stroke-linejoin="round" paint-order="stroke" >Bloomington</text>
<text x="1094.0" y="347.7" font-family="Liberation Sans" font-size="12" fill="#4a4d52" stroke="#ffffff" stroke-width="2.6" stroke-linejoin="round" paint-order="stroke" >Enniskillen</text>
<text x="235.4" y="389.0" font-family="Liberation Sans" font-size="12" fill="#4a4d52" stroke="#ffffff" stroke-width="2.6" stroke-linejoin="round" paint-order="stroke" >Ballycroy</text>
<text x="609.4" y="386.0" font-family="Liberation Sans" font-size="12" fill="#4a4d52" stroke="#ffffff" stroke-width="2.6" stroke-linejoin="round" paint-order="stroke" >Preston Lake</text>
<text x="692.6" y="396.8" font-family="Liberation Sans" font-size="12" fill="#4a4d52" stroke="#ffffff" stroke-width="2.6" stroke-linejoin="round" paint-order="stroke" >Whitchurch-Stouffville</text>
<text x="1115.3" y="395.0" font-family="Liberation Sans" font-size="12" fill="#4a4d52" stroke="#ffffff" stroke-width="2.6" stroke-linejoin="round" paint-order="stroke" >Hampton</text>
<text x="1225.4" y="390.3" font-family="Liberation Sans" font-size="12" fill="#4a4d52" stroke="#ffffff" stroke-width="2.6" stroke-linejoin="round" paint-order="stroke" >Orono</text>
<text x="1431.3" y="392.9" font-family="Liberation Sans" font-size="12" fill="#4a4d52" stroke="#ffffff" stroke-width="2.6" stroke-linejoin="round" paint-order="stroke" >Welcome</text>
<text x="1570.0" y="407.9" font-family="Liberation Sans" font-size="12" fill="#4a4d52" stroke="#ffffff" stroke-width="2.6" stroke-linejoin="round" paint-order="stroke" >Cobourg</text>
<text x="1467.4" y="418.7" font-family="Liberation Sans" font-size="12" fill="#4a4d52" stroke="#ffffff" stroke-width="2.6" stroke-linejoin="round" paint-order="stroke" >Port Hope</text>
<text x="267.6" y="419.6" font-family="Liberation Sans" font-size="12" fill="#4a4d52" stroke="#ffffff" stroke-width="2.6" stroke-linejoin="round" paint-order="stroke" >Palgrave</text>
<text x="198.0" y="424.8" font-family="Liberation Sans" font-size="12" fill="#4a4d52" stroke="#ffffff" stroke-width="2.6" stroke-linejoin="round" paint-order="stroke" >ills</text>
<text x="1073.7" y="413.5" font-family="Liberation Sans" font-size="12" fill="#4a4d52" stroke="#ffffff" stroke-width="2.6" stroke-linejoin="round" paint-order="stroke" >Mitchell</text>
<text x="1073.7" y="426.0" font-family="Liberation Sans" font-size="12" fill="#4a4d52" stroke="#ffffff" stroke-width="2.6" stroke-linejoin="round" paint-order="stroke" >Corners</text>
<text x="623.5" y="426.6" font-family="Liberation Sans" font-size="12" fill="#4a4d52" stroke="#ffffff" stroke-width="2.6" stroke-linejoin="round" paint-order="stroke" >Gormley</text>
<text x="505.5" y="441.7" font-family="Liberation Sans" font-size="12" fill="#4a4d52" stroke="#ffffff" stroke-width="2.6" stroke-linejoin="round" paint-order="stroke" >King City</text>
<text x="1227.4" y="435.0" font-family="Liberation Sans" font-size="12" fill="#4a4d52" stroke="#ffffff" stroke-width="2.6" stroke-linejoin="round" paint-order="stroke" >Clarington</text>
<text x="1307.4" y="432.0" font-family="Liberation Sans" font-size="12" fill="#4a4d52" stroke="#ffffff" stroke-width="2.6" stroke-linejoin="round" paint-order="stroke" >Newtonville</text>
<text x="1366.3" y="447.0" font-family="Liberation Sans" font-size="12" fill="#4a4d52" stroke="#ffffff" stroke-width="2.6" stroke-linejoin="round" paint-order="stroke" >Wesleyville</text>
<text x="472.5" y="457.5" font-family="Liberation Sans" font-size="12" fill="#4a4d52" stroke="#ffffff" stroke-width="2.6" stroke-linejoin="round" paint-order="stroke" >Laskay</text>
<text x="1085.6" y="461.8" font-family="Liberation Sans" font-size="12" fill="#4a4d52" stroke="#ffffff" stroke-width="2.6" stroke-linejoin="round" paint-order="stroke" >Courtice</text>
<text x="1152.3" y="459.4" font-family="Liberation Sans" font-size="12" fill="#4a4d52" stroke="#ffffff" stroke-width="2.6" stroke-linejoin="round" paint-order="stroke" >Bowmanville</text>
<text x="1236.5" y="453.5" font-family="Liberation Sans" font-size="12" fill="#4a4d52" stroke="#ffffff" stroke-width="2.6" stroke-linejoin="round" paint-order="stroke" >Newcastle</text>
<text x="1332.5" y="467.7" font-family="Liberation Sans" font-size="12" fill="#4a4d52" stroke="#ffffff" stroke-width="2.6" stroke-linejoin="round" paint-order="stroke" >Port Granby</text>
<text x="407.7" y="470.4" font-family="Liberation Sans" font-size="12" fill="#4a4d52" stroke="#ffffff" stroke-width="2.6" stroke-linejoin="round" paint-order="stroke" >Nobleton</text>
<text x="763.5" y="473.7" font-family="Liberation Sans" font-size="12" fill="#4a4d52" stroke="#ffffff" stroke-width="2.6" stroke-linejoin="round" paint-order="stroke" >Green River</text>
<text x="970.8" y="473.0" font-family="Liberation Sans" font-size="12" fill="#4a4d52" stroke="#ffffff" stroke-width="2.6" stroke-linejoin="round" paint-order="stroke" >Whitby</text>
<text x="353.9" y="501.9" font-family="Liberation Sans" font-size="12" fill="#4a4d52" stroke="#ffffff" stroke-width="2.6" stroke-linejoin="round" paint-order="stroke" >Bolton</text>
<text x="228.7" y="505.6" font-family="Liberation Sans" font-size="12" fill="#4a4d52" stroke="#ffffff" stroke-width="2.6" stroke-linejoin="round" paint-order="stroke" >Caledon East</text>
<text x="396.4" y="525.0" font-family="Liberation Sans" font-size="12" fill="#4a4d52" stroke="#ffffff" stroke-width="2.6" stroke-linejoin="round" paint-order="stroke" >Kleinburg</text>
<text x="402.6" y="537.3" font-family="Liberation Sans" font-size="12" fill="#4a4d52" stroke="#ffffff" stroke-width="2.6" stroke-linejoin="round" paint-order="stroke" >Station</text>
<text x="914.5" y="525.8" font-family="Liberation Sans" font-size="12" fill="#4a4d52" stroke="#ffffff" stroke-width="2.6" stroke-linejoin="round" paint-order="stroke" >Ajax</text>
<text x="849.2" y="540.0" font-family="Liberation Sans" font-size="12" fill="#4a4d52" stroke="#ffffff" stroke-width="2.6" stroke-linejoin="round" paint-order="stroke" >Pickering</text>
<text x="386.6" y="560.8" font-family="Liberation Sans" font-size="12" fill="#4a4d52" stroke="#ffffff" stroke-width="2.6" stroke-linejoin="round" paint-order="stroke" >Coleraine</text>
<text x="196.0" y="671.6" font-family="Liberation Sans" font-size="12" fill="#4a4d52" stroke="#ffffff" stroke-width="2.6" stroke-linejoin="round" paint-order="stroke" >ra Cotta</text>
<text x="217.5" y="788.5" font-family="Liberation Sans" font-size="12" fill="#4a4d52" stroke="#ffffff" stroke-width="2.6" stroke-linejoin="round" paint-order="stroke" >Ashgrove</text>
<text x="294.8" y="784.0" font-family="Liberation Sans" font-size="12" fill="#4a4d52" stroke="#ffffff" stroke-width="2.6" stroke-linejoin="round" paint-order="stroke" >Whaley&#39;s</text>
<text x="296.4" y="796.5" font-family="Liberation Sans" font-size="12" fill="#4a4d52" stroke="#ffffff" stroke-width="2.6" stroke-linejoin="round" paint-order="stroke" >Corners</text>
<text x="197.0" y="832.0" font-family="Liberation Sans" font-size="12" fill="#4a4d52" stroke="#ffffff" stroke-width="2.6" stroke-linejoin="round" paint-order="stroke" >Block</text>
<text x="263.5" y="833.9" font-family="Liberation Sans" font-size="12" fill="#4a4d52" stroke="#ffffff" stroke-width="2.6" stroke-linejoin="round" paint-order="stroke" >Hornby</text>
<text x="239.4" y="886.8" font-family="Liberation Sans" font-size="12" fill="#4a4d52" stroke="#ffffff" stroke-width="2.6" stroke-linejoin="round" paint-order="stroke" >Milton</text>
<text x="550.7" y="493.7" font-family="Liberation Sans" font-size="15" fill="#3c4043" stroke="#ffffff" stroke-width="2.6" stroke-linejoin="round" paint-order="stroke" style="font-weight:500">Richmond Hill</text>
<text x="648.6" y="518.6" font-family="Liberation Sans" font-size="15" fill="#3c4043" stroke="#ffffff" stroke-width="2.6" stroke-linejoin="round" paint-order="stroke" style="font-weight:500">Markham</text>
<text x="477.9" y="552.6" font-family="Liberation Sans" font-size="15" fill="#3c4043" stroke="#ffffff" stroke-width="2.6" stroke-linejoin="round" paint-order="stroke" style="font-weight:500">Vaughan</text>
<text x="1021.6" y="477.5" font-family="Liberation Sans" font-size="15" fill="#3c4043" stroke="#ffffff" stroke-width="2.6" stroke-linejoin="round" paint-order="stroke" style="font-weight:500">Oshawa</text>
<text x="313.0" y="655.6" font-family="Liberation Sans" font-size="15" fill="#3c4043" stroke="#ffffff" stroke-width="2.6" stroke-linejoin="round" paint-order="stroke" style="font-weight:500">Brampton</text>
<text x="377.6" y="942.7" font-family="Liberation Sans" font-size="15" fill="#3c4043" stroke="#ffffff" stroke-width="2.6" stroke-linejoin="round" paint-order="stroke" style="font-weight:500">Oakville</text>
<text x="610.0" y="742.4" font-family="Liberation Sans" font-size="20" fill="#202124" stroke="#ffffff" stroke-width="2.6" stroke-linejoin="round" paint-order="stroke" >Toronto</text>
<text x="381.9" y="815.2" font-family="Liberation Sans" font-size="20" fill="#202124" stroke="#ffffff" stroke-width="2.6" stroke-linejoin="round" paint-order="stroke" >Mississauga</text>
<text x="208.5" y="975.5" font-family="Liberation Sans" font-size="18" stroke="#ffffff" stroke-width="2" stroke-opacity="0.6" paint-order="stroke"><tspan fill="#4285F4">G</tspan><tspan fill="#EA4335">o</tspan><tspan fill="#FBBC05">o</tspan><tspan fill="#4285F4">g</tspan><tspan fill="#34A853">l</tspan><tspan fill="#EA4335">e</tspan></text>
<rect x="1329" y="970" width="354" height="14" fill="#ffffff" fill-opacity="0.66"/>
<rect x="1426.0" y="970" width="1" height="14" fill="#9cc0f9"/>
<rect x="1548.0" y="970" width="1" height="14" fill="#9cc0f9"/>
<rect x="1588.0" y="970" width="1" height="14" fill="#9cc0f9"/>
<text x="1333.5" y="980" font-family="Liberation Sans" font-size="10" fill="#3c3c3c">Keyboard shortcuts</text>
<text x="1432.4" y="980" font-family="Liberation Sans" font-size="10" fill="#3c3c3c">Map Data ©2024 Google</text>
<text x="1554" y="980" font-family="Liberation Sans" font-size="10" fill="#3c3c3c">Terms</text>
<text x="1594.3" y="980" font-family="Liberation Sans" font-size="10" fill="#3c3c3c">Report a map error</text>
<circle cx="806.2" cy="600.2" r="12.8" fill="#1fc085" stroke="#0d6541" stroke-width="2"/>
<circle cx="826.4" cy="591" r="12.8" fill="#1fc085" stroke="#0d6541" stroke-width="2"/>
<circle cx="817.5" cy="581.7" r="12.8" fill="#1fc085" stroke="#0d6541" stroke-width="2"/>
<circle cx="803.9" cy="579.8" r="12.8" fill="#1fc085" stroke="#0d6541" stroke-width="2"/>
<circle cx="795" cy="621" r="12.8" fill="#1fc085" stroke="#0d6541" stroke-width="2"/>
<circle cx="770.9" cy="569.8" r="12.8" fill="#1fc085" stroke="#0d6541" stroke-width="2"/>
<circle cx="624.8" cy="632.7" r="12.8" fill="#1fc085" stroke="#0d6541" stroke-width="2"/>
<circle cx="1049" cy="496" r="12.8" fill="#1fc085" stroke="#0d6541" stroke-width="2"/>
</svg>
</div>

<div id="dl" class="a">Daycare List</div>
<div id="thead" class="a"></div>
<div class="a th" style="left:40px">DAYCARES</div>
<div class="a th" style="left:446px">ADDRESS</div>
<div class="a th" style="left:870px">AGE RANGE</div>
<div class="a th" style="left:1119px">CONTACT INFORMATION</div>
<div class="a th" style="left:1598px">RATING</div>
<svg class="a" style="left:1648px;top:1074px" width="12" height="20" viewBox="0 0 12 20"><path d="M2.4 6.0 L5.9 2.3 L9.4 6.0 M2.4 13.5 L5.9 17.2 L9.4 13.5" fill="none" stroke="#4b5675" stroke-width="2.1" stroke-linecap="round" stroke-linejoin="round"/></svg>

<div class="a td lnk" style="left:40px;top:1148px">Sunshine Childcare</div>
<div class="a td" style="left:449px;top:1148px">111 Island Rd, Scarborough,Ontario M1C 2P7</div>
<div class="a td" style="left:834px;top:1164px">0-5</div>
<div class="a td" style="left:1081px;top:1152px">555-1234</div>
<div class="a td lnk" style="left:1081px;top:1170px">dilu.alphonso@gmail.com</div>
<div class="a rowline" style="top:1196px"></div>
<svg class="a" style="left:1600px;top:1160px" width="100" height="30" viewBox="1600 1160 100 30"><path d="M1617.70 1168.80 L1619.99 1173.44 L1625.12 1174.19 L1621.41 1177.81 L1622.28 1182.91 L1617.70 1180.50 L1613.12 1182.91 L1613.99 1177.81 L1610.28 1174.19 L1615.41 1173.44 Z" fill="#ffc107" stroke="#ffc107" stroke-width="0.7" stroke-linejoin="round"/><path d="M1633.80 1168.80 L1636.09 1173.44 L1641.22 1174.19 L1637.51 1177.81 L1638.38 1182.91 L1633.80 1180.50 L1629.22 1182.91 L1630.09 1177.81 L1626.38 1174.19 L1631.51 1173.44 Z" fill="#ffc107" stroke="#ffc107" stroke-width="0.7" stroke-linejoin="round"/><clipPath id="hc0"><rect x="1640.90" y="1166.60" width="9.30" height="20"/></clipPath><path clip-path="url(#hc0)" d="M1649.90 1168.80 L1652.19 1173.44 L1657.32 1174.19 L1653.61 1177.81 L1654.48 1182.91 L1649.90 1180.50 L1645.32 1182.91 L1646.19 1177.81 L1642.48 1174.19 L1647.61 1173.44 Z" fill="#ffc107" stroke="#ffc107" stroke-width="0.7" stroke-linejoin="round"/><path d="M1666.00 1169.50 L1668.09 1173.73 L1672.75 1174.41 L1669.38 1177.70 L1670.17 1182.34 L1666.00 1180.15 L1661.83 1182.34 L1662.62 1177.70 L1659.25 1174.41 L1663.91 1173.73 Z" fill="none" stroke="#6e6e6e" stroke-width="1.3" stroke-linejoin="round"/><path d="M1682.10 1169.50 L1684.19 1173.73 L1688.85 1174.41 L1685.48 1177.70 L1686.27 1182.34 L1682.10 1180.15 L1677.93 1182.34 L1678.72 1177.70 L1675.35 1174.41 L1680.01 1173.73 Z" fill="none" stroke="#6e6e6e" stroke-width="1.3" stroke-linejoin="round"/></svg>
<div class="a td lnk" style="left:40px;top:1245px">Creative Minds Daycare</div>
<div class="a td" style="left:449px;top:1245px">734 Kingston Road, Pickering,Ontario L1V 1A8</div>
<div class="a td" style="left:834px;top:1261px">0-4</div>
<div class="a td" style="left:1081px;top:1249px">555-5678</div>
<div class="a td lnk" style="left:1081px;top:1267px">sambaheerathan@gmail.com</div>
<div class="a rowline" style="top:1293px"></div>
<svg class="a" style="left:1600px;top:1257px" width="100" height="30" viewBox="1600 1257 100 30"><path d="M1617.70 1265.80 L1619.99 1270.44 L1625.12 1271.19 L1621.41 1274.81 L1622.28 1279.91 L1617.70 1277.50 L1613.12 1279.91 L1613.99 1274.81 L1610.28 1271.19 L1615.41 1270.44 Z" fill="#ffc107" stroke="#ffc107" stroke-width="0.7" stroke-linejoin="round"/><path d="M1633.80 1265.80 L1636.09 1270.44 L1641.22 1271.19 L1637.51 1274.81 L1638.38 1279.91 L1633.80 1277.50 L1629.22 1279.91 L1630.09 1274.81 L1626.38 1271.19 L1631.51 1270.44 Z" fill="#ffc107" stroke="#ffc107" stroke-width="0.7" stroke-linejoin="round"/><path d="M1649.90 1265.80 L1652.19 1270.44 L1657.32 1271.19 L1653.61 1274.81 L1654.48 1279.91 L1649.90 1277.50 L1645.32 1279.91 L1646.19 1274.81 L1642.48 1271.19 L1647.61 1270.44 Z" fill="#ffc107" stroke="#ffc107" stroke-width="0.7" stroke-linejoin="round"/><path d="M1666.00 1266.50 L1668.09 1270.73 L1672.75 1271.41 L1669.38 1274.70 L1670.17 1279.34 L1666.00 1277.15 L1661.83 1279.34 L1662.62 1274.70 L1659.25 1271.41 L1663.91 1270.73 Z" fill="none" stroke="#6e6e6e" stroke-width="1.3" stroke-linejoin="round"/><path d="M1682.10 1266.50 L1684.19 1270.73 L1688.85 1271.41 L1685.48 1274.70 L1686.27 1279.34 L1682.10 1277.15 L1677.93 1279.34 L1678.72 1274.70 L1675.35 1271.41 L1680.01 1270.73 Z" fill="none" stroke="#6e6e6e" stroke-width="1.3" stroke-linejoin="round"/></svg>
<div class="a td lnk" style="left:40px;top:1342px">East Side Preschool</div>
<div class="a td" style="left:449px;top:1342px">458 Fairall Street, Ajax,Ontario L1S 1R6</div>
<div class="a td" style="left:834px;top:1358px">2-6</div>
<div class="a td" style="left:1081px;top:1346px">555-9012</div>
<div class="a td lnk" style="left:1081px;top:1364px">jessica@example.com</div>
<div class="a rowline" style="top:1390px"></div>
<svg class="a" style="left:1600px;top:1354px" width="100" height="30" viewBox="1600 1354 100 30"><path d="M1617.70 1362.80 L1619.99 1367.44 L1625.12 1368.19 L1621.41 1371.81 L1622.28 1376.91 L1617.70 1374.50 L1613.12 1376.91 L1613.99 1371.81 L1610.28 1368.19 L1615.41 1367.44 Z" fill="#ffc107" stroke="#ffc107" stroke-width="0.7" stroke-linejoin="round"/><path d="M1633.80 1362.80 L1636.09 1367.44 L1641.22 1368.19 L1637.51 1371.81 L1638.38 1376.91 L1633.80 1374.50 L1629.22 1376.91 L1630.09 1371.81 L1626.38 1368.19 L1631.51 1367.44 Z" fill="#ffc107" stroke="#ffc107" stroke-width="0.7" stroke-linejoin="round"/><path d="M1649.90 1363.50 L1651.99 1367.73 L1656.65 1368.41 L1653.28 1371.70 L1654.07 1376.34 L1649.90 1374.15 L1645.73 1376.34 L1646.52 1371.70 L1643.15 1368.41 L1647.81 1367.73 Z" fill="none" stroke="#6e6e6e" stroke-width="1.3" stroke-linejoin="round"/><path d="M1666.00 1363.50 L1668.09 1367.73 L1672.75 1368.41 L1669.38 1371.70 L1670.17 1376.34 L1666.00 1374.15 L1661.83 1376.34 L1662.62 1371.70 L1659.25 1368.41 L1663.91 1367.73 Z" fill="none" stroke="#6e6e6e" stroke-width="1.3" stroke-linejoin="round"/><path d="M1682.10 1363.50 L1684.19 1367.73 L1688.85 1368.41 L1685.48 1371.70 L1686.27 1376.34 L1682.10 1374.15 L1677.93 1376.34 L1678.72 1371.70 L1675.35 1368.41 L1680.01 1367.73 Z" fill="none" stroke="#6e6e6e" stroke-width="1.3" stroke-linejoin="round"/></svg>
</body></html>
